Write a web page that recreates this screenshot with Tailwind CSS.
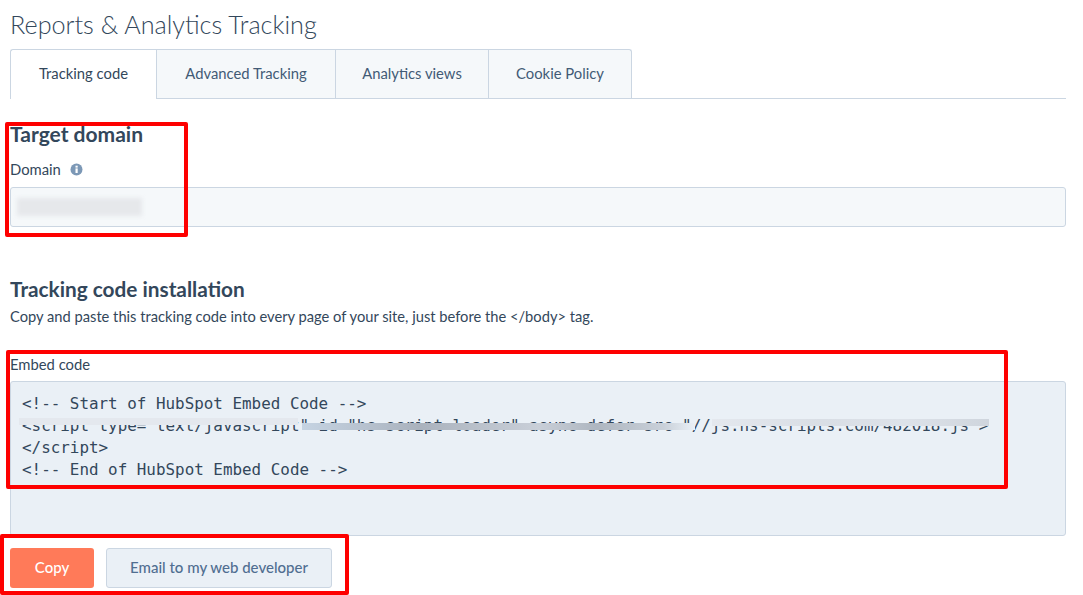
<!DOCTYPE html>
<html lang="en">
<head>
    <meta charset="UTF-8">
    <title>Reports &amp; Analytics Tracking</title>
    <script src="https://cdn.jsdelivr.net/npm/@tailwindcss/browser@4"></script>
</head>
<body class="bg-white overflow-hidden font-['Lato',sans-serif] text-[#33475b]">
    <div class="relative w-[1083px] h-[595px] overflow-hidden pl-[10px] pr-[17px]">
        <h1 class="h-[49px] pt-[8px] text-[25.2px] leading-[33px] font-light text-[#33475b]">Reports &amp; Analytics Tracking</h1>

        <!-- Tabs -->
        <div class="flex h-[50px] border-b border-[#cbd6e2] text-[14.8px]">
            <div class="w-[146px] h-[50px] pb-[3px] flex items-center justify-center bg-white border-l border-t border-[#cbd6e2] rounded-tl-[3px]">Tracking code</div>
            <div class="w-[179px] h-[49px] pb-[2px] flex items-center justify-center bg-[#f5f8fa] border-l border-t border-[#cbd6e2] text-[#425b76]">Advanced Tracking</div>
            <div class="w-[153px] h-[49px] pb-[2px] flex items-center justify-center bg-[#f5f8fa] border-l border-t border-[#cbd6e2] text-[#425b76]">Analytics views</div>
            <div class="w-[144px] h-[49px] pb-[2px] flex items-center justify-center bg-[#f5f8fa] border-l border-t border-r border-[#cbd6e2] rounded-tr-[3px] text-[#425b76]">Cookie Policy</div>
        </div>

        <!-- Target domain -->
        <h2 class="mt-[22px] text-[21px] leading-[26px] font-bold">Target domain</h2>
        <div class="mt-[12px] flex items-center h-[20px] text-[14.8px]">
            Domain
            <svg class="ml-[9px]" width="13" height="13" viewBox="0 0 13 13">
                <circle cx="6.5" cy="6.5" r="6" fill="#7c98b6"/>
                <rect x="5.5" y="5.4" width="2.2" height="4.6" fill="#fff"/>
                <rect x="5.5" y="2.7" width="2.2" height="1.9" fill="#fff"/>
            </svg>
        </div>
        <div class="relative mt-[8px] h-[40px] bg-[#f5f8fa] border border-[#cbd6e2] rounded-[3px]">
            <div class="absolute left-[6px] top-[10px] w-[125px] h-[18px] bg-[#e6e8eb] blur-[2px]"></div>
        </div>

        <!-- Installation -->
        <h2 class="mt-[48px] text-[20.8px] leading-[28px] font-bold">Tracking code installation</h2>
        <p class="mt-[3px] text-[14.7px] leading-[20px]">Copy and paste this tracking code into every page of your site, just before the &lt;/body&gt; tag.</p>
        <div class="mt-[28px] h-[20px] text-[14.8px] leading-[20px]">Embed code</div>
        <div class="relative mt-[7px] h-[155px] bg-[#eaf0f6] border border-[#cbd6e2] rounded-[3px] pl-[11px] pt-[11px] overflow-hidden">
            <pre class="font-['DejaVu_Sans_Mono',monospace] text-[15.9px] leading-[22px] text-[#33475b]">&lt;!-- Start of HubSpot Embed Code --&gt;
&lt;script type="text/javascript" id="hs-script-loader" async defer src="//js.hs-scripts.com/482018.js"&gt;
&lt;/script&gt;
&lt;!-- End of HubSpot Embed Code --&gt;</pre>
            <!-- redacted strips -->
            <div class="absolute left-[8px] top-[36px] w-[279px] h-[7px] bg-[#e4e8ee]"></div>
            <div class="absolute left-[291px] top-[41px] w-[393px] h-[7px] bg-[linear-gradient(90deg,#c5d3e2,#aab2bd_30%,#c9cfd8_60%,#aeb6c0_75%,#c9d0d9_92%,#eaf0f6)]"></div>
            <div class="absolute left-[701px] top-[37px] w-[277px] h-[7px] bg-[linear-gradient(90deg,#e4e8ee,#d9dee5_40%,#dde2e9_70%,#cfd5dd)]"></div>
        </div>

        <!-- Buttons -->
        <div class="mt-[12px] flex gap-[12px]">
            <button class="w-[84px] h-[40px] pb-[2px] bg-[#ff7a59] text-white text-[15px] font-medium rounded-[3px]">Copy</button>
            <button class="w-[226px] h-[40px] pb-[2px] bg-[#eaf0f6] border border-[#cbd6e2] text-[#506e91] text-[15px] font-medium rounded-[3px]">Email to my web developer</button>
        </div>

        <!-- Red annotation boxes -->
        <div class="absolute left-[5px] top-[122px] w-[183px] h-[115px] border-[4px] border-[#fe0000] rounded-[2px]"></div>
        <div class="absolute left-[6px] top-[350px] w-[1002px] h-[139px] border-[4px] border-[#fe0000] rounded-[2px]"></div>
        <div class="absolute left-[0px] top-[534px] w-[349px] h-[61px] border-[4px] border-[#fe0000] rounded-[2px]"></div>
    </div>
</body>
</html>
